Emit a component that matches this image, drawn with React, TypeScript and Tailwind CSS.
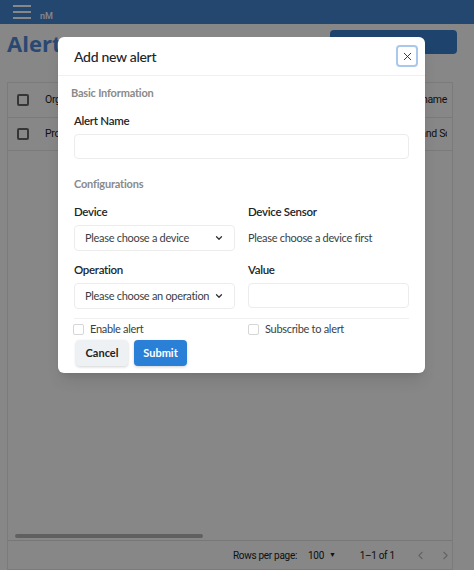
import React from "react";
import { X, ChevronDown, ChevronLeft, ChevronRight } from "lucide-react";

function Field({ label, children }: { label: string; children: React.ReactNode }) {
  return (
    <div className="flex flex-col">
      <label className="h-[24px] text-[11.5px] font-semibold leading-[24px] tracking-[-0.3px] text-[#212529]">{label}</label>
      <div className="mt-[1px]">{children}</div>
    </div>
  );
}

function Select({ text }: { text: string }) {
  return (
    <div className="flex h-[26px] items-center justify-between whitespace-nowrap rounded-[4px] border border-[#ececec] bg-white pl-[10px] pr-[10px] text-[11px] tracking-[-0.3px] text-[#3a3f44]">
      <span>{text}</span>
      <ChevronDown size={10} strokeWidth={3} className="text-[#333]" />
    </div>
  );
}

export default function App() {
  return (
    <div className="relative h-[570px] w-[474px] overflow-hidden bg-white" style={{ fontFamily: "Roboto, 'Liberation Sans', sans-serif" }}>
      {/* page behind */}
      <div className="flex h-[24px] items-center bg-[#4286d2] px-[13px]">
        <div className="flex w-[18px] flex-col gap-[4px]">
          <span className="h-[2px] bg-white" />
          <span className="h-[2px] bg-white" />
          <span className="h-[2px] bg-white" />
        </div>
        <span className="ml-[9px] mt-[10px] text-[9px] font-medium text-white">nM</span>
      </div>
      <div className="flex items-start justify-between pl-[7px] pr-[17px] pt-[6px]">
        <h1 className="text-[22px] font-bold leading-[26px] text-[#4f8ad8]" style={{ fontFamily: "'Open Sans', sans-serif" }}>Alerts</h1>
        <div className="h-[24px] w-[127px] rounded-[4px] bg-[#3a80d0]" />
      </div>
      <div className="mx-[7px] mt-[26px] flex h-[488px] w-[446px] flex-col border border-[#e8e8e8]">
        <div className="flex h-[35px] items-center whitespace-nowrap border-b border-[#e6e6e6] text-[10.5px] tracking-[-0.3px] text-[#222]">
          <span className="ml-[9px] h-[12px] w-[12px] rounded-[2px] border-2 border-[#666]" />
          <span className="ml-[16px]">Org</span>
          <span className="ml-auto mr-[5px]">Device name</span>
        </div>
        <div className="flex h-[33px] items-center whitespace-nowrap border-b border-[#e6e6e6] text-[10.5px] tracking-[-0.3px] text-[#222]">
          <span className="ml-[9px] h-[12px] w-[12px] rounded-[2px] border-2 border-[#666]" />
          <span className="ml-[16px]">Production</span>
          <span className="ml-auto mr-[5px] w-[54px] overflow-hidden">North and South</span>
        </div>
        <div className="flex-1" />
        <div className="relative h-[8px] border-b border-[#e0e0e0]">
          <div className="absolute left-[7px] top-[1px] h-[4px] w-[188px] rounded-full bg-[#b5b5b5]" />
        </div>
        <div className="flex h-[28px] items-center whitespace-nowrap text-[10px] tracking-[-0.3px] text-[#222]">
          <span className="ml-[225px]">Rows per page:</span>
          <span className="ml-[11px]">100</span>
          <span className="ml-[5px] text-[7px]">▼</span>
          <span className="ml-[24px]">1–1 of 1</span>
          <ChevronLeft size={13} className="ml-[19px] text-[#bbb]" />
          <ChevronRight size={13} className="ml-[12px] text-[#bbb]" />
        </div>
      </div>

      {/* overlay */}
      <div className="absolute inset-0 bg-black/[0.47]" />

      {/* modal */}
      <div
        className="absolute left-[58px] top-[37px] w-[367px] rounded-[6px] bg-white shadow-lg"
        style={{ fontFamily: "Lato, 'Noto Sans', sans-serif" }}
      >
        <div className="flex h-[39px] items-center justify-between border-b border-[#f0f0f0] pl-[16px] pr-[7px]">
          <h2 className="text-[14px] font-medium tracking-[-0.3px] text-[#212529]">Add new alert</h2>
          <button className="flex h-[22px] w-[22px] items-center justify-center rounded-[4px] border-2 border-[#a9c8eb] bg-white">
            <X size={13} strokeWidth={1.6} className="text-[#222]" />
          </button>
        </div>
        <div className="px-[16px] pb-[7px]">
          <div className="-ml-[3px] pt-[8px] text-[11px] font-bold leading-[18px] tracking-[-0.2px] text-[#8a8a8a]">Basic Information</div>
          <div className="mt-[7px]">
            <Field label="Alert Name">
              <div className="h-[25px] rounded-[4px] border border-[#ececec] bg-white" />
            </Field>
          </div>
          <div className="mt-[16px] text-[11px] font-bold leading-[18px] tracking-[-0.2px] text-[#8a8a8a]">Configurations</div>
          <div className="mt-[7px] grid grid-cols-2 gap-x-[13px] gap-y-[7px]">
            <Field label="Device">
              <Select text="Please choose a device" />
            </Field>
            <Field label="Device Sensor">
              <div className="flex h-[26px] items-center whitespace-nowrap text-[11px] tracking-[-0.3px] text-[#3a3f44]">Please choose a device first</div>
            </Field>
            <Field label="Operation">
              <Select text="Please choose an operation" />
            </Field>
            <Field label="Value">
              <div className="h-[25px] rounded-[4px] border border-[#ececec] bg-white" />
            </Field>
          </div>
          <div className="mt-[9px] grid grid-cols-2 gap-x-[13px] border-t border-[#f0f0f0] pt-[2px]">
            <label className="-ml-[1px] flex h-[16px] items-center gap-[6px] text-[11px] tracking-[-0.3px] text-[#3a3f44]">
              <span className="h-[11px] w-[11px] rounded-[2px] border border-[#d6d6d6] bg-white" />
              Enable alert
            </label>
            <label className="flex h-[16px] items-center gap-[6px] text-[11px] tracking-[-0.3px] text-[#3a3f44]">
              <span className="h-[11px] w-[11px] rounded-[2px] border border-[#d6d6d6] bg-white" />
              Subscribe to alert
            </label>
          </div>
          <div className="mt-[3px] flex gap-[6px] pl-[2px]">
            <button className="h-[26px] w-[52px] rounded-[4px] bg-[#eef1f4] text-[11px] font-bold text-[#222] shadow-[0_1px_3px_rgba(0,0,0,0.18)]">
              Cancel
            </button>
            <button className="h-[26px] w-[53px] rounded-[4px] bg-[#2a80d6] text-[11px] font-bold text-white shadow-[0_1px_3px_rgba(0,0,0,0.18)]">
              Submit
            </button>
          </div>
        </div>
      </div>
    </div>
  );
}
